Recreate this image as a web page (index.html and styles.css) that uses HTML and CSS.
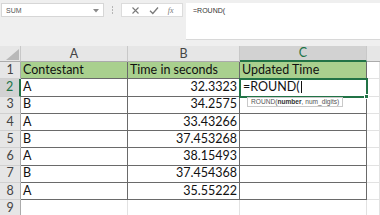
FILE: index.html
```html
<!DOCTYPE html>
<html>
<head>
<meta charset="utf-8">
<link rel="stylesheet" href="styles.css">
</head>
<body>
<div class="app">
  <div class="toolbar">
    <div class="namebox">
      <span class="name-text">SUM</span>
      <svg class="dd" width="6" height="4" viewBox="0 0 6 4"><path d="M0 0 L6 0 L3 3.5 Z" fill="#8a8a8a"/></svg>
    </div>
    <div class="dots"><i></i><i></i><i></i></div>
    <div class="fxbox">
      <svg width="9" height="9" viewBox="0 0 9 9"><path d="M1.5 1.5 L7.5 7.5 M7.5 1.5 L1.5 7.5" stroke="#7a7a7a" stroke-width="1.1" fill="none"/></svg>
      <svg width="10" height="9" viewBox="0 0 10 9"><path d="M1 4.8 L3.8 7.5 L9 1.5" stroke="#7a7a7a" stroke-width="1.3" fill="none"/></svg>
      <span class="fx">fx</span>
    </div>
    <div class="formula">=ROUND(</div>
  </div>
  <div class="sheet">
    <div class="corner"><svg width="13" height="11" viewBox="0 0 13 11"><path d="M13 0 L13 11 L0 11 Z" fill="#b8b8b8"/></svg></div>
    <div class="colhead">A</div>
    <div class="colhead">B</div>
    <div class="colhead sel">C</div>
    <div class="colhead last"></div>

    <div class="rowhead">1</div>
    <div class="cell b hdr">Contestant</div>
    <div class="cell b hdr">Time in seconds</div>
    <div class="cell b hdr">Updated Time</div>
    <div class="cell g"></div>

    <div class="rowhead sel">2</div>
    <div class="cell b">A</div>
    <div class="cell b num">32.3323</div>
    <div class="cell b active">=ROUND(<span class="caret"></span><span class="handle"></span>
      <div class="tip">ROUND(<b>number</b>, num_digits)</div>
    </div>
    <div class="cell g"></div>

    <div class="rowhead">3</div>
    <div class="cell b">B</div>
    <div class="cell b num">34.2575</div>
    <div class="cell b"></div>
    <div class="cell g"></div>

    <div class="rowhead">4</div>
    <div class="cell b">A</div>
    <div class="cell b num">33.43266</div>
    <div class="cell b"></div>
    <div class="cell g"></div>

    <div class="rowhead">5</div>
    <div class="cell b">B</div>
    <div class="cell b num">37.453268</div>
    <div class="cell b"></div>
    <div class="cell g"></div>

    <div class="rowhead">6</div>
    <div class="cell b">A</div>
    <div class="cell b num">38.15493</div>
    <div class="cell b"></div>
    <div class="cell g"></div>

    <div class="rowhead">7</div>
    <div class="cell b">B</div>
    <div class="cell b num">37.454368</div>
    <div class="cell b"></div>
    <div class="cell g"></div>

    <div class="rowhead">8</div>
    <div class="cell b">A</div>
    <div class="cell b num">35.55222</div>
    <div class="cell b"></div>
    <div class="cell g"></div>

    <div class="rowhead">9</div>
    <div class="cell g"></div>
    <div class="cell g"></div>
    <div class="cell g"></div>
    <div class="cell g"></div>
  </div>
</div>
</body>
</html>
```
FILE: styles.css
```css
* { box-sizing: border-box; }
html, body { margin: 0; padding: 0; }
body { width: 380px; height: 215px; overflow: hidden; background: #fff; font-family: Lato, "Open Sans", sans-serif; }
.app { width: 380px; height: 215px; overflow: hidden; }

.toolbar {
  height: 46px;
  background: #efefef;
  display: flex;
  align-items: flex-start;
  padding: 3px 0 0 1px;
}
.namebox {
  width: 103px; height: 14px;
  background: #fff;
  border: 1px solid #d6d6d6;
  display: flex; align-items: center; justify-content: space-between;
  padding: 0 4px 0 4px;
}
.name-text { font-family: "Liberation Sans", sans-serif; font-size: 7px; color: #555; }
.dd { margin-top: 1px; }
.dots { width: 17px; height: 14px; display: flex; flex-direction: column; align-items: center; justify-content: center; gap: 1.5px; }
.dots i { display: block; width: 1.5px; height: 1.5px; background: #b5b5b5; }
.fxbox {
  width: 62px; height: 14px;
  background: #fff;
  border: 1px solid #dcdcdc;
  display: flex; align-items: center; justify-content: space-around;
  padding: 0 4px 0 5px;
}
.fx { font-family: "Liberation Serif", serif; font-style: italic; font-size: 8px; color: #777; }
.formula {
  margin-left: 3px;
  flex: 1;
  height: 37px;
  background: #fff;
  border-bottom: 1px solid #d8d8d8;
  font-family: "Liberation Sans", sans-serif;
  font-size: 7px;
  color: #333;
  padding: 4px 0 0 7px;
}

.sheet {
  display: grid;
  grid-template-columns: 21px 107px 112px 127px 1fr;
  grid-template-rows: 16px repeat(9, 17.25px);
  background: #fff;
}
.corner {
  background: #e6e6e6;
  border-right: 1px solid #c8c8c8;
  border-bottom: 1px solid #ababab;
  display: flex; align-items: flex-end; justify-content: flex-end;
  padding: 0 1px 1px 0;
}
.colhead {
  background: #e6e6e6;
  border-right: 1px solid #c8c8c8;
  border-bottom: 1px solid #ababab;
  font-size: 12.5px; color: #444;
  display: flex; align-items: center; justify-content: center;
  line-height: 1;
  padding-top: 1px;
}
.colhead.sel { background: #d2d2d2; color: #217346; border-bottom: 2px solid #217346; }
.colhead.last { border-right: none; }

.rowhead {
  background: #e6e6e6;
  border-right: 1px solid #ababab;
  border-bottom: 1px solid #d0d0d0;
  font-size: 12.5px; color: #444;
  display: flex; align-items: center; justify-content: center;
  line-height: 1;
}
.rowhead.sel { background: #d2d2d2; color: #217346; border-right: 2px solid #217346; }

.cell {
  font-size: 12.5px; color: #111;
  display: flex; align-items: center;
  padding: 0 2px;
  line-height: 1;
  white-space: nowrap;
  position: relative;
}
.cell.b { border-right: 1px solid #6a6a6a; border-bottom: 1px solid #6a6a6a; }
.cell.g { border-right: 1px solid #e2e2e2; border-bottom: 1px solid #e2e2e2; }
.cell.hdr { background: #a9d08e; }
.cell.num { justify-content: flex-end; }
.cell.active {
  outline: 2px solid #217346;
  outline-offset: -1px;
  z-index: 2;
  padding-left: 3px;
}
.caret { display: inline-block; width: 1px; height: 12px; background: #111; margin-left: 1px; }
.handle {
  position: absolute; right: -3px; bottom: -3px;
  width: 5px; height: 5px; background: #217346; border: 1px solid #fff;
}
.tip {
  position: absolute; left: 7px; top: 18px;
  height: 10px;
  background: #fff;
  border: 1px solid #c9c9c9;
  font-family: "Liberation Sans", sans-serif;
  font-size: 6.6px; color: #555;
  padding: 0 3px;
  display: flex; align-items: center;
}
.tip b { color: #333; }
```
